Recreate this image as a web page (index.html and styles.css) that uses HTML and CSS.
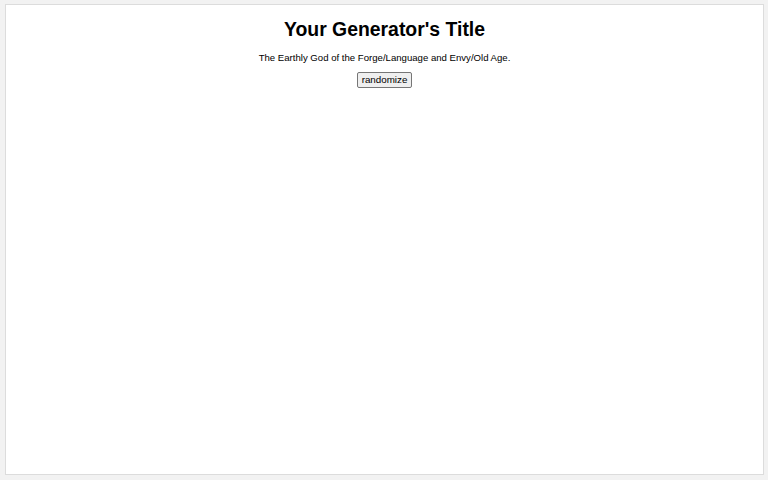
FILE: index.html
```html
<!DOCTYPE html>
<html>
<head>
<meta charset="utf-8">
<link rel="stylesheet" href="styles.css">
</head>
<body>
<div class="frame">
  <h1 class="title">Your Generator's Title</h1>
  <p class="output">The Earthly God of the Forge/Language and Envy/Old Age.</p>
  <button class="btn">randomize</button>
</div>
</body>
</html>
```
FILE: styles.css
```css
html, body { margin: 0; padding: 0; }
body {
  background: #f2f2f2;
  font-family: "Liberation Sans", Arial, sans-serif;
  padding: 4px 4px 4px 5px;
  box-sizing: border-box;
  height: 480px;
}
.frame {
  background: #fff;
  border: 1px solid #dcdcdc;
  height: 471px;
  box-sizing: border-box;
  text-align: center;
  padding-top: 14px;
}
.title {
  font-size: 19.4px;
  font-weight: bold;
  margin: 0;
  line-height: 20px;
  color: #000;
}
.output {
  font-size: 9.6px;
  margin: 13px 0 5px;
  line-height: 12px;
  color: #000;
}
.btn {
  font-family: "Liberation Sans", Arial, sans-serif;
  font-size: 9.8px;
  padding: 1px 4px;
  line-height: 12px;
  background: #efefef;
  border: 1px solid #767676;
  border-radius: 2px;
  color: #000;
}
```
